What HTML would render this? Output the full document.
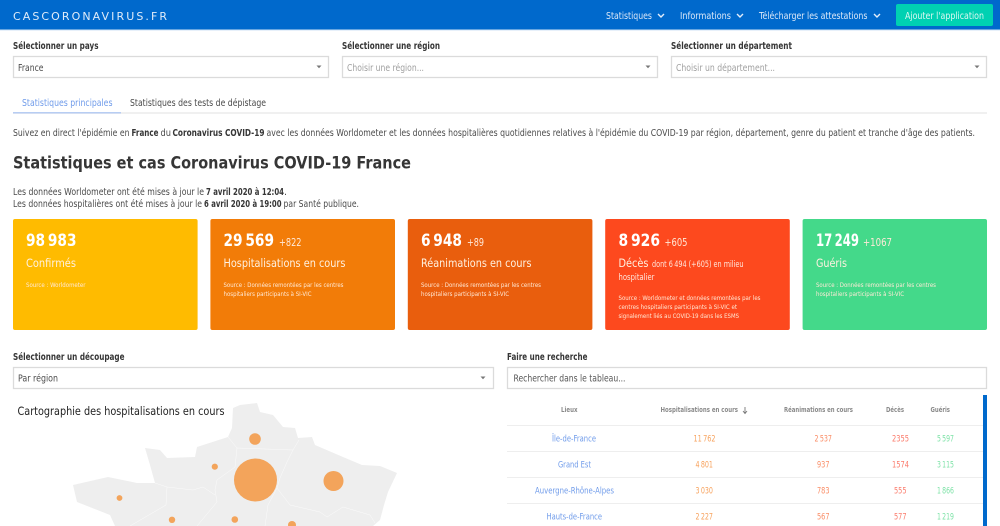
<!DOCTYPE html>
<html lang="fr"><head><meta charset="utf-8"><title>Cas Coronavirus France</title>
<style>
html,body{margin:0;padding:0;background:#fff;width:1000px;height:526px;overflow:hidden}
svg{display:block}
text{font-family:"DejaVu Sans",sans-serif;white-space:pre}
.lab{font-size:9.5px;font-weight:700;fill:#363636}
.sel{fill:#fff;stroke:#dbdbdb;stroke-width:1.3}
.t{font-size:9.5px;fill:#4a4a4a}
.ph{font-size:9.5px;fill:#a0a0a0}
.nav{font-size:9.8px;fill:#dbe8f8}
.body{font-size:9.5px;fill:#4a4a4a}
.bb{font-size:9.5px;font-weight:700;fill:#363636}
.n{font-size:16.5px;font-weight:700;fill:#fff}
.d{font-size:10.5px;fill:#ffe9d8}
.l{font-size:11.5px;fill:#fff1e0}
.s{font-size:6.2px;fill:#ffe9d6}
.th{font-size:6.8px;font-weight:700;fill:#8a8a8a}
.c{font-size:8.8px}
.lk{fill:#6f9bea}.h{fill:#f7a25d}.r{fill:#fa8d66}.x{fill:#fb7b6b}.g{fill:#7ce2a6}
</style></head><body>
<svg width="1000" height="526" viewBox="0 0 1000 526" xmlns="http://www.w3.org/2000/svg">
<rect width="1000" height="29.5" fill="#0069cc"/>
<rect y="29.5" width="1000" height="1" fill="#cfe2f5"/>
<text x="13" y="20" textLength="154" lengthAdjust="spacing" font-size="11" fill="#e0ecf9">CASCORONAVIRUS.FR</text>
<text class="nav" x="606" y="19" textLength="46" lengthAdjust="spacingAndGlyphs">Statistiques</text>
<path d="M658 14l3 3 3-3" fill="none" stroke="#e4eefa" stroke-width="1.4"/>
<text class="nav" x="680" y="19" textLength="51" lengthAdjust="spacingAndGlyphs">Informations</text>
<path d="M737 14l3 3 3-3" fill="none" stroke="#e4eefa" stroke-width="1.4"/>
<text class="nav" x="759" y="19" textLength="108.500" lengthAdjust="spacingAndGlyphs">Télécharger les attestations</text>
<path d="M874 14l3 3 3-3" fill="none" stroke="#e4eefa" stroke-width="1.4"/>
<rect x="896" y="4" width="97" height="22" rx="2" fill="#00d1b2"/>
<text x="905" y="19" font-size="9.8" textLength="79" lengthAdjust="spacingAndGlyphs" fill="#dcf8f2">Ajouter l'application</text>

<text class="lab" x="13" y="49" textLength="85.500" lengthAdjust="spacingAndGlyphs">Sélectionner un pays</text>
<text class="lab" x="342" y="49" textLength="98" lengthAdjust="spacingAndGlyphs">Sélectionner une région</text>
<text class="lab" x="671" y="49" textLength="121" lengthAdjust="spacingAndGlyphs">Sélectionner un département</text>
<rect class="sel" x="13.500" y="56.500" width="315" height="21"/>
<rect class="sel" x="342.500" y="56.500" width="315" height="21"/>
<rect class="sel" x="671.500" y="56.500" width="315" height="21"/>
<text class="t" x="18" y="71" textLength="25.500" lengthAdjust="spacingAndGlyphs">France</text>
<text class="ph" x="347" y="71" textLength="77" lengthAdjust="spacingAndGlyphs">Choisir une région...</text>
<text class="ph" x="676" y="71" textLength="99" lengthAdjust="spacingAndGlyphs">Choisir un département...</text>
<path d="M316.500 65.500h5l-2.500 2.800zM645.500 65.500h5l-2.500 2.800zM974.500 65.500h5l-2.500 2.800z" fill="#777"/>

<rect x="13" y="112" width="974" height="2" fill="#f0f0f0"/>
<rect x="13" y="112" width="108" height="1.500" fill="#b7cdf3"/>
<text x="22" y="106" font-size="9.500" fill="#6f9bea" textLength="90.500" lengthAdjust="spacingAndGlyphs">Statistiques principales</text>
<text x="130" y="106" font-size="9.500" fill="#4a4a4a" textLength="136" lengthAdjust="spacingAndGlyphs">Statistiques des tests de dépistage</text>

<text class="body" x="13" y="136" textLength="116.500" lengthAdjust="spacingAndGlyphs">Suivez en direct l'épidémie en</text>
<text class="bb" x="131.500" y="136" textLength="27" lengthAdjust="spacingAndGlyphs">France</text>
<text class="body" x="160.500" y="136" textLength="10.500" lengthAdjust="spacingAndGlyphs">du</text>
<text class="bb" x="172.500" y="136" textLength="92" lengthAdjust="spacingAndGlyphs">Coronavirus COVID-19</text>
<text class="body" x="266.500" y="136" textLength="708.500" lengthAdjust="spacingAndGlyphs">avec les données Worldometer et les données hospitalières quotidiennes relatives à l'épidémie du COVID-19 par région, département, genre du patient et tranche d'âge des patients.</text>
<text x="13" y="168.500" font-size="17" font-weight="700" fill="#363636" textLength="398" lengthAdjust="spacingAndGlyphs">Statistiques et cas Coronavirus COVID-19 France</text>
<text class="body" x="13" y="195" textLength="191" lengthAdjust="spacingAndGlyphs">Les données Worldometer ont été mises à jour le</text>
<text class="bb" x="206" y="195" textLength="78" lengthAdjust="spacingAndGlyphs">7 avril 2020 à 12:04</text>
<text class="body" x="284" y="195">.</text>
<text class="body" x="13" y="207" textLength="189" lengthAdjust="spacingAndGlyphs">Les données hospitalières ont été mises à jour le</text>
<text class="bb" x="204" y="207" textLength="77.500" lengthAdjust="spacingAndGlyphs">6 avril 2020 à 19:00</text>
<text class="body" x="283.500" y="207" textLength="75.500" lengthAdjust="spacingAndGlyphs">par Santé publique.</text>

<rect x="13" y="219" width="184.600" height="111" rx="2" fill="#ffbb00"/>
<rect x="210.400" y="219" width="184.600" height="111" rx="2" fill="#f27c08"/>
<rect x="407.800" y="219" width="184.600" height="111" rx="2" fill="#e95e0d"/>
<rect x="605.200" y="219" width="184.600" height="111" rx="2" fill="#fd491e"/>
<rect x="802.600" y="219" width="184.400" height="111" rx="2" fill="#44d98a"/>

<text class="n" x="26" y="246" textLength="50.500" lengthAdjust="spacingAndGlyphs">98&#8201;983</text>
<text class="l" x="26" y="267" textLength="50" lengthAdjust="spacingAndGlyphs">Confirmés</text>
<text class="s" x="26" y="287" textLength="59.500" lengthAdjust="spacingAndGlyphs">Source : Worldometer</text>

<text class="n" x="223.500" y="246" textLength="50.500" lengthAdjust="spacingAndGlyphs">29&#8201;569</text>
<text class="d" x="279" y="246" textLength="22.500" lengthAdjust="spacingAndGlyphs">+822</text>
<text class="l" x="223.500" y="267" textLength="122" lengthAdjust="spacingAndGlyphs">Hospitalisations en cours</text>
<text class="s" x="223.500" y="287" textLength="120" lengthAdjust="spacingAndGlyphs">Source : Données remontées par les centres</text>
<text class="s" x="223.500" y="296" textLength="88" lengthAdjust="spacingAndGlyphs">hospitaliers participants à SI-VIC</text>

<text class="n" x="421" y="246" textLength="41" lengthAdjust="spacingAndGlyphs">6&#8201;948</text>
<text class="d" x="467" y="246" textLength="17" lengthAdjust="spacingAndGlyphs">+89</text>
<text class="l" x="421" y="267" textLength="110.500" lengthAdjust="spacingAndGlyphs">Réanimations en cours</text>
<text class="s" x="421" y="287" textLength="120" lengthAdjust="spacingAndGlyphs">Source : Données remontées par les centres</text>
<text class="s" x="421" y="296" textLength="88" lengthAdjust="spacingAndGlyphs">hospitaliers participants à SI-VIC</text>

<text class="n" x="618.500" y="246" textLength="41.500" lengthAdjust="spacingAndGlyphs">8&#8201;926</text>
<text class="d" x="664.500" y="246" textLength="23" lengthAdjust="spacingAndGlyphs">+605</text>
<text class="l" x="618.500" y="267" textLength="30" lengthAdjust="spacingAndGlyphs">Décès</text>
<text x="652" y="267" font-size="8.500" fill="#ffe6dc" textLength="91.500" lengthAdjust="spacingAndGlyphs">dont 6&#8201;494 (+605) en milieu</text>
<text x="618.500" y="280" font-size="8.500" fill="#ffe6dc" textLength="36" lengthAdjust="spacingAndGlyphs">hospitalier</text>
<text class="s" x="618.500" y="300" textLength="142" lengthAdjust="spacingAndGlyphs">Source : Worldometer et données remontées par les</text>
<text class="s" x="618.500" y="309" textLength="118.500" lengthAdjust="spacingAndGlyphs">centres hospitaliers participants à SI-VIC et</text>
<text class="s" x="618.500" y="318" textLength="120.500" lengthAdjust="spacingAndGlyphs">signalement liés au COVID-19 dans les ESMS</text>

<text class="n" x="816" y="246" textLength="43" lengthAdjust="spacingAndGlyphs">17&#8201;249</text>
<text class="d" x="863" y="246" textLength="29" lengthAdjust="spacingAndGlyphs" fill="#eafaf1">+1067</text>
<text class="l" x="816" y="267" textLength="31" lengthAdjust="spacingAndGlyphs">Guéris</text>
<text class="s" x="816" y="287" textLength="120" lengthAdjust="spacingAndGlyphs">Source : Données remontées par les centres</text>
<text class="s" x="816" y="296" textLength="88" lengthAdjust="spacingAndGlyphs">hospitaliers participants à SI-VIC</text>

<text class="lab" x="13" y="360" textLength="111.500" lengthAdjust="spacingAndGlyphs">Sélectionner un découpage</text>
<text class="lab" x="507" y="360" textLength="80.500" lengthAdjust="spacingAndGlyphs">Faire une recherche</text>
<rect class="sel" x="13.500" y="367.500" width="480" height="21"/>
<rect class="sel" x="507.500" y="367.500" width="479" height="21"/>
<text class="t" x="18" y="381.500" textLength="40" lengthAdjust="spacingAndGlyphs">Par région</text>
<path d="M480.500 376.500h5l-2.500 2.800z" fill="#777"/>
<text x="513.500" y="381.500" font-size="9.500" fill="#555" textLength="112" lengthAdjust="spacingAndGlyphs">Rechercher dans le tableau...</text>

<path d="M233 408L240 405 257 403 260 412 273 415 283 427 295 428 298 438 312 437 315 445 343 457 362 465 380 466 397 473 388 492 384 505 380 520 373 526H115L110 515 77 502 73 485 108 477 137 483 155 483 150 465 145 448 160 450 167 458 195 457 197 447 228 437 232 428Z" fill="#eeeeee"/>
<g fill="none" stroke="#fbfbfb" stroke-width=".5">
<path d="M228 437L237 448 235 467 217 480 215 490 217 502 197 526"/>
<path d="M155 483L167 487 193 490 203 487 215 495"/>
<path d="M167 487L166 505 130 526"/>
<path d="M237 448L293 450 299 440"/>
<path d="M293 450L287 462 280 478 277 488 290 505 320 512 327 517 343 507 370 515 375 523"/>
<path d="M277 488L268 505 265 526"/>
</g>
<g fill="#f29f52" fill-opacity=".95">
<circle cx="255.500" cy="480" r="21.500"/>
<circle cx="255" cy="439" r="5.800"/>
<circle cx="333.500" cy="481" r="10"/>
<circle cx="214.800" cy="466.700" r="3.100"/>
<circle cx="119.500" cy="498" r="2.900"/>
<circle cx="172" cy="519.800" r="3.200"/>
<circle cx="234.800" cy="519.500" r="3.300"/>
<circle cx="292" cy="525" r="4"/>
</g>
<text x="17.500" y="415" font-size="11.500" fill="#222" textLength="207" lengthAdjust="spacingAndGlyphs">Cartographie des hospitalisations en cours</text>

<rect x="983" y="395" width="4" height="131" fill="#0069cc"/>
<text class="th" x="561" y="412" textLength="16.500" lengthAdjust="spacingAndGlyphs">Lieux</text>
<text class="th" x="660.500" y="412" textLength="77.500" lengthAdjust="spacingAndGlyphs">Hospitalisations en cours</text>
<path d="M745 407v6M743 411l2 2.500 2-2.500" fill="none" stroke="#777" stroke-width=".9"/>
<text class="th" x="784" y="412" textLength="69" lengthAdjust="spacingAndGlyphs">Réanimations en cours</text>
<text class="th" x="886" y="412" textLength="18" lengthAdjust="spacingAndGlyphs">Décès</text>
<text class="th" x="930.500" y="412" textLength="19.500" lengthAdjust="spacingAndGlyphs">Guéris</text>
<path d="M507 425.500H983M507 451.500H983M507 477.500H983M507 503.500H983" stroke="#eeeeee" stroke-width="1"/>

<text class="c lk" x="552" y="441.500" textLength="44" lengthAdjust="spacingAndGlyphs">Île-de-France</text>
<text class="c h" x="693.500" y="441.500" textLength="22" lengthAdjust="spacingAndGlyphs">11&#8201;762</text>
<text class="c r" x="814.500" y="441.500" textLength="17.500" lengthAdjust="spacingAndGlyphs">2&#8201;537</text>
<text class="c x" x="892" y="441.500" textLength="17" lengthAdjust="spacingAndGlyphs">2355</text>
<text class="c g" x="937" y="441.500" textLength="17" lengthAdjust="spacingAndGlyphs">5&#8201;597</text>

<text class="c lk" x="558" y="467.500" textLength="33" lengthAdjust="spacingAndGlyphs">Grand Est</text>
<text class="c h" x="695.500" y="467.500" textLength="17.500" lengthAdjust="spacingAndGlyphs">4&#8201;801</text>
<text class="c r" x="817" y="467.500" textLength="12.500" lengthAdjust="spacingAndGlyphs">937</text>
<text class="c x" x="892" y="467.500" textLength="17" lengthAdjust="spacingAndGlyphs">1574</text>
<text class="c g" x="937" y="467.500" textLength="17" lengthAdjust="spacingAndGlyphs">3&#8201;115</text>

<text class="c lk" x="535" y="493.500" textLength="79" lengthAdjust="spacingAndGlyphs">Auvergne-Rhône-Alpes</text>
<text class="c h" x="695.500" y="493.500" textLength="17.500" lengthAdjust="spacingAndGlyphs">3&#8201;030</text>
<text class="c r" x="817" y="493.500" textLength="12.500" lengthAdjust="spacingAndGlyphs">783</text>
<text class="c x" x="894" y="493.500" textLength="12.500" lengthAdjust="spacingAndGlyphs">555</text>
<text class="c g" x="937" y="493.500" textLength="17" lengthAdjust="spacingAndGlyphs">1&#8201;866</text>

<text class="c lk" x="546.500" y="519.500" textLength="55.500" lengthAdjust="spacingAndGlyphs">Hauts-de-France</text>
<text class="c h" x="695.500" y="519.500" textLength="17.500" lengthAdjust="spacingAndGlyphs">2&#8201;227</text>
<text class="c r" x="817" y="519.500" textLength="12.500" lengthAdjust="spacingAndGlyphs">567</text>
<text class="c x" x="894" y="519.500" textLength="12.500" lengthAdjust="spacingAndGlyphs">577</text>
<text class="c g" x="937" y="519.500" textLength="17" lengthAdjust="spacingAndGlyphs">1&#8201;219</text>
</svg>
</body></html>
